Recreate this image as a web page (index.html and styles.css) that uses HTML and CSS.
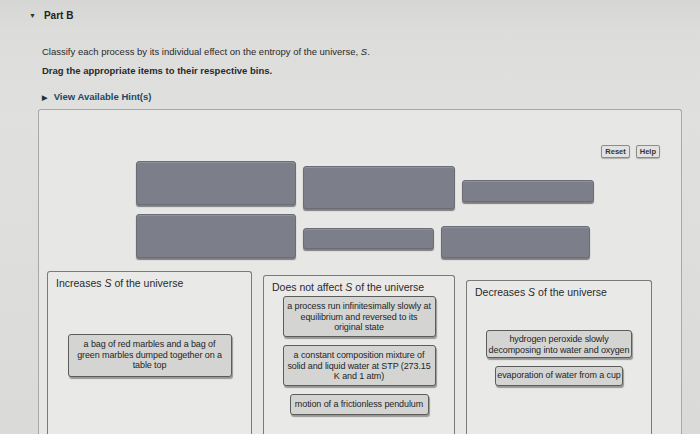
FILE: index.html
```html
<!DOCTYPE html>
<html>
<head>
<meta charset="utf-8">
<link rel="stylesheet" href="styles.css">
</head>
<body>
<div class="page">
  <div class="part-header">
    <span class="caret">&#9660;</span>
    <span class="part-title">Part B</span>
  </div>
  <div class="content">
    <p class="prompt">Classify each process by its individual effect on the entropy of the universe, <i>S</i>.</p>
    <p class="instr">Drag the appropriate items to their respective bins.</p>
    <p class="hint"><span class="hint-caret">&#9654;</span> View Available Hint(s)</p>
  </div>
  <div class="panel">
    <div class="toolbar">
      <button class="btn">Reset</button>
      <button class="btn">Help</button>
    </div>
    <div class="source">
      <div class="tile-row">
        <div class="tile t-a"></div>
        <div class="tile t-b"></div>
        <div class="tile t-c"></div>
      </div>
      <div class="tile-row">
        <div class="tile t-d"></div>
        <div class="tile t-e"></div>
        <div class="tile t-f"></div>
      </div>
    </div>
    <div class="bins">
      <div class="bin bin-1">
        <div class="bin-label">Increases <i>S</i> of the universe</div>
        <div class="bin-items items-1">
          <div class="card c-wide">a bag of red marbles and a bag of<br>green marbles dumped together on a<br>table top</div>
        </div>
      </div>
      <div class="bin bin-2">
        <div class="bin-label">Does not affect <i>S</i> of the universe</div>
        <div class="bin-items items-2">
          <div class="card c-mid">a process run infinitesimally slowly at<br>equilibrium and reversed to its<br>original state</div>
          <div class="card c-mid">a constant composition mixture of<br>solid and liquid water at STP (273.15<br>K and 1 atm)</div>
          <div class="card c-short">motion of a frictionless pendulum</div>
        </div>
      </div>
      <div class="bin bin-3">
        <div class="bin-label">Decreases <i>S</i> of the universe</div>
        <div class="bin-items items-3">
          <div class="card c-h2o2">hydrogen peroxide slowly<br>decomposing into water and oxygen</div>
          <div class="card c-evap">evaporation of water from a cup</div>
        </div>
      </div>
    </div>
  </div>
</div>
</body>
</html>
```

FILE: styles.css
```css
* { box-sizing: border-box; }
html, body {
  margin: 0;
  padding: 0;
  width: 700px;
  height: 434px;
  overflow: hidden;
}
body {
  font-family: "Liberation Sans", Arial, sans-serif;
  color: #222;
  background: linear-gradient(180deg, #d6d6d4 0px, #dcdcda 30px, #e0e0de 120px, #dadad8 434px);
}
.page {
  height: 434px;
  overflow: hidden;
}
.part-header {
  height: 32px;
  display: flex;
  align-items: center;
  padding-left: 29px;
  gap: 8px;
  padding-bottom: 2px;
}
.caret {
  font-size: 7px;
  color: #333;
}
.part-title {
  font-size: 10px;
  font-weight: bold;
  color: #222;
}
.content {
  padding-left: 42px;
  padding-top: 14px;
}
.content p { margin: 0; }
.prompt {
  font-size: 9.5px;
  line-height: 12px;
  color: #2a2a2a;
}
.instr {
  margin-top: 7px !important;
  font-size: 9.5px;
  line-height: 12px;
  font-weight: bold;
  color: #2a2a2a;
}
.hint {
  margin-top: 14px !important;
  font-size: 9.5px;
  line-height: 12px;
  font-weight: bold;
  color: #1f4763;
}
.hint-caret {
  font-size: 7px;
  color: #1f2f3a;
  margin-right: 4px;
}
.panel {
  margin-left: 38px;
  margin-top: 5px;
  width: 644px;
  height: 326px;
  border: 1px solid #a9a9a7;
  border-bottom: none;
  border-radius: 3px 3px 0 0;
  background: #e7e7e5;
  padding-top: 35px;
  overflow: hidden;
}
.toolbar {
  display: flex;
  justify-content: flex-end;
  gap: 6px;
  padding-right: 21px;
  height: 13px;
}
.btn {
  font-family: "Liberation Sans", Arial, sans-serif;
  font-size: 7.5px;
  font-weight: bold;
  color: #333;
  background: #e2e2e0;
  border: 1px solid #8c8c8a;
  border-radius: 2px;
  padding: 0 3px;
  height: 13px;
  line-height: 11px;
  box-shadow: 0 1px 1px rgba(0,0,0,0.25);
}
.source {
  padding-left: 97px;
  margin-top: 3px;
  display: flex;
  flex-direction: column;
  gap: 5px;
}
.tile-row {
  display: flex;
  align-items: flex-start;
  gap: 7px;
}
.tile {
  background: #7c7f89;
  border-radius: 3px;
  border: 1px solid #6a6d76;
  box-shadow: 0 2px 1px rgba(40,40,45,0.55), inset 0 1px 0 rgba(255,255,255,0.15);
}
.t-a { width: 160px; height: 44px; }
.t-b { width: 152px; height: 43px; margin-top: 5px; }
.t-c { width: 132px; height: 22px; margin-top: 19px; }
.t-d { width: 160px; height: 44px; }
.t-e { width: 131px; height: 21px; margin-top: 14px; }
.t-f { width: 149px; height: 32px; margin-top: 12px; }
.bins {
  display: flex;
  align-items: flex-start;
  padding-left: 8px;
  gap: 11px;
  margin-top: 13px;
}
.bin {
  border: 1px solid #7a7a78;
  border-bottom: none;
  border-radius: 3px 3px 0 0;
  background: #e9e9e7;
  height: 170px;
}
.bin-1 { width: 205px; }
.bin-2 { width: 192px; margin-top: 4px; }
.bin-3 { width: 186px; margin-top: 9px; }
.bin-label {
  font-size: 10.5px;
  line-height: 12px;
  color: #2a2a2a;
  padding: 5px 0 0 8px;
}
.bin-items {
  display: flex;
  flex-direction: column;
  align-items: center;
  gap: 8px;
}
.items-1 { margin-top: 45px; }
.items-2 { margin-top: 3px; }
.items-3 { margin-top: 32px; }
.card {
  background: #d4d4d2;
  border: 1px solid #5c5c5a;
  border-radius: 3px;
  box-shadow: 1px 2px 1px rgba(0,0,0,0.35);
  font-size: 9px;
  line-height: 10.5px;
  letter-spacing: -0.1px;
  color: #252525;
  text-align: center;
  padding: 3px 1px;
  white-space: nowrap;
}
.c-wide { width: 164px; height: 43px; padding-top: 4px; }
.c-mid { width: 153px; height: 41px; padding-top: 4px; }
.c-short { width: 139px; height: 21px; padding-top: 4px; }
.c-h2o2 { width: 146px; height: 28px; padding-top: 3px; }
.c-evap { width: 128px; height: 20px; padding-top: 3px; }
```
